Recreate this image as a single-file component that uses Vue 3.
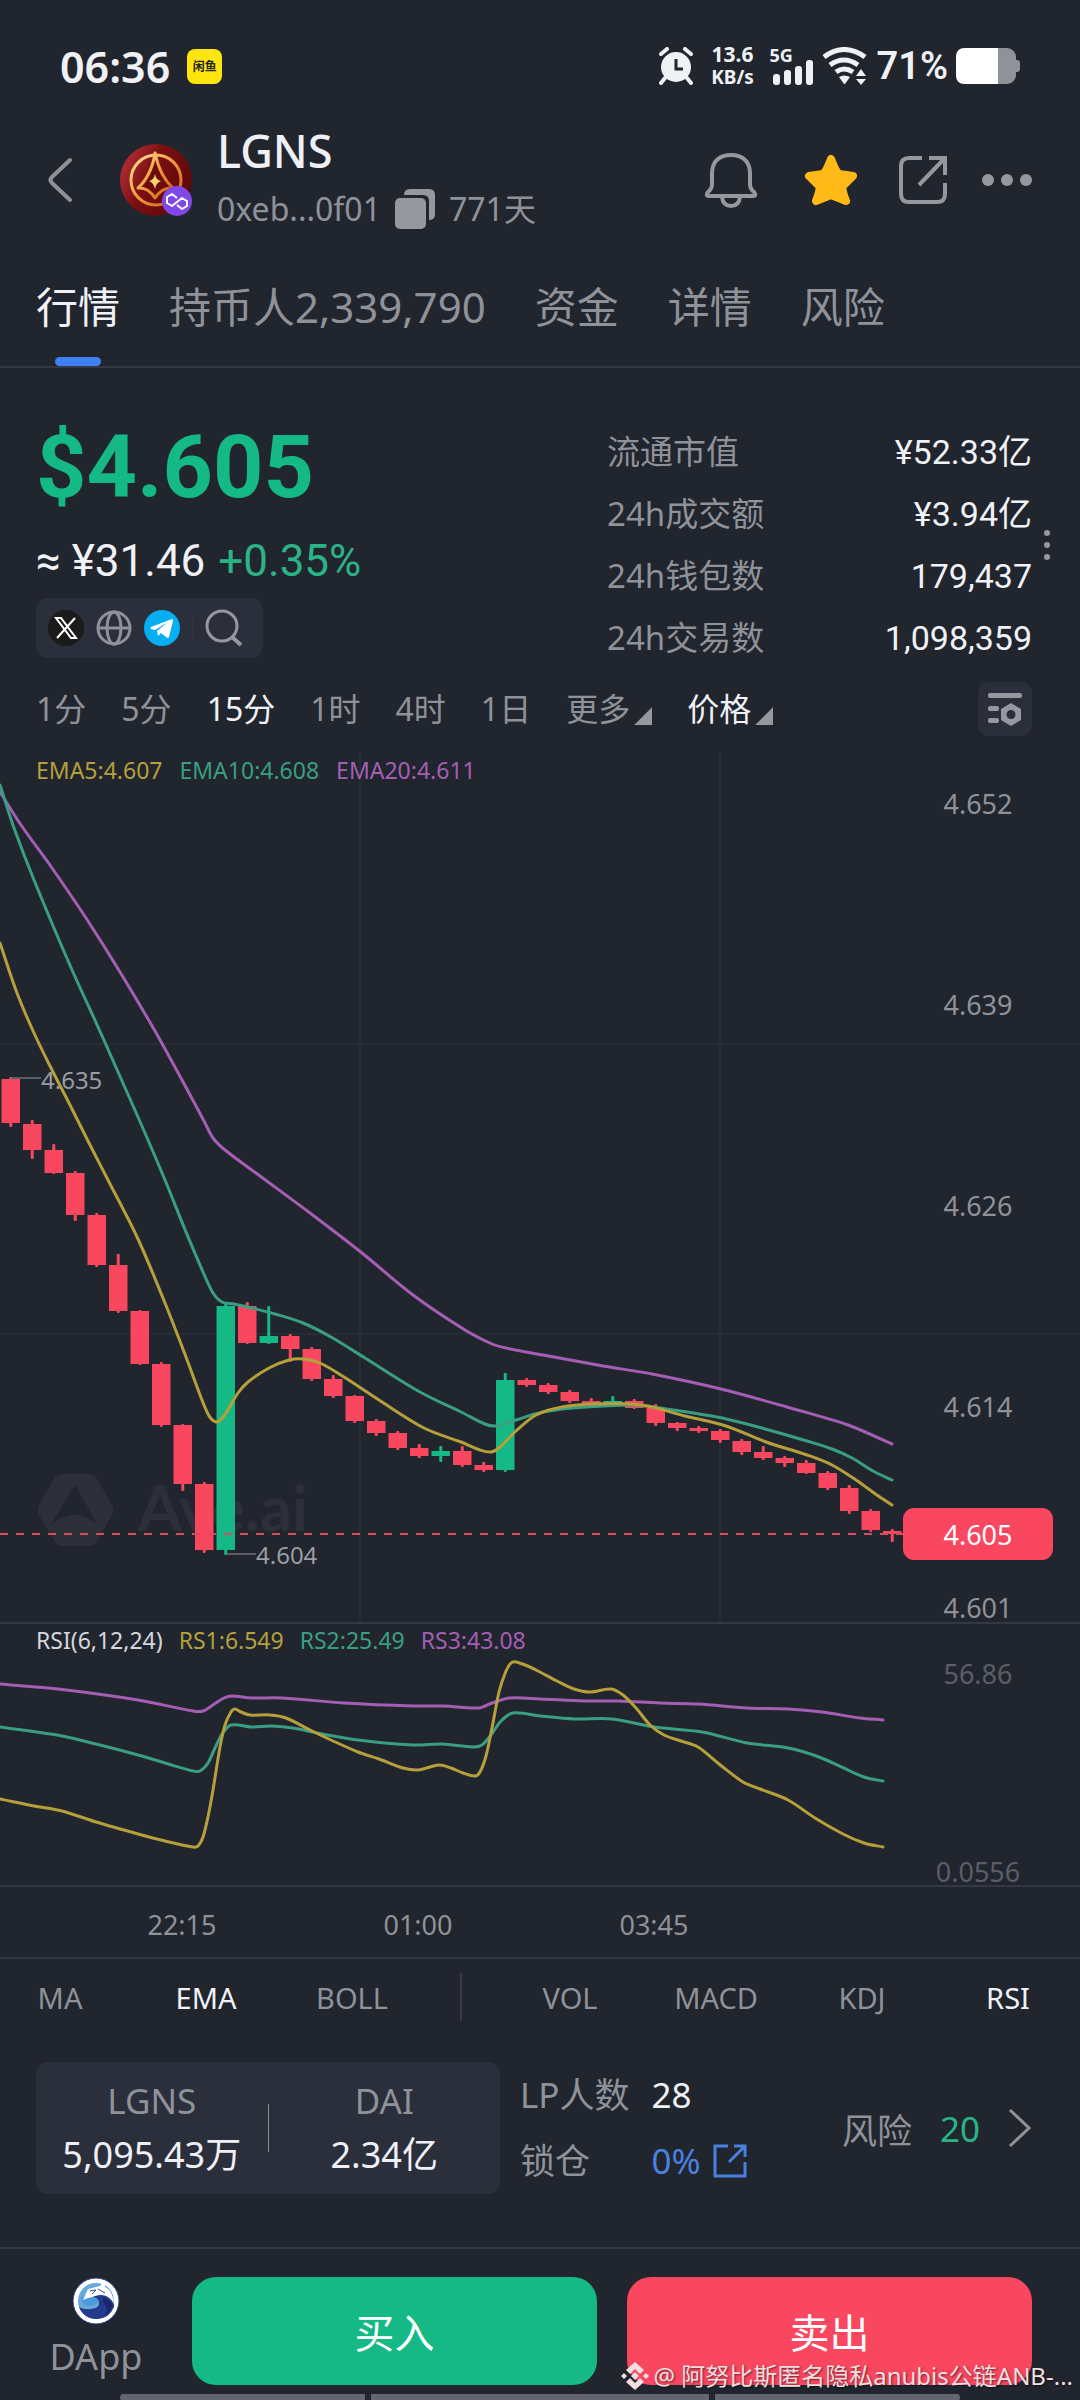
<script setup>
import { ref } from 'vue'

const tabs = ['行情', '持币人2,339,790', '资金', '详情', '风险']
const activeTab = ref('行情')

const stats = [
  { label: '流通市值', value: '¥52.33亿' },
  { label: '24h成交额', value: '¥3.94亿' },
  { label: '24h钱包数', value: '179,437' },
  { label: '24h交易数', value: '1,098,359' },
]

const periods = ['1分', '5分', '15分', '1时', '4时', '1日']
const activePeriod = ref('15分')

const overlays = ['MA', 'EMA', 'BOLL']
const oscillators = ['VOL', 'MACD', 'KDJ', 'RSI']
const activeOverlay = ref('EMA')
const activeOscillator = ref('RSI')

const axisLabels = [
  { text: '4.652', y: 814 },
  { text: '4.639', y: 1015 },
  { text: '4.626', y: 1216 },
  { text: '4.614', y: 1417 },
  { text: '4.601', y: 1618 },
]
const times = ['22:15', '01:00', '03:45']

// [body top, body bottom, wick top, wick bottom, rising]
const candleData = [
  [1079, 1123, 1077, 1127], [1124, 1150, 1120, 1159], [1150, 1173, 1144, 1174],
  [1173, 1215, 1171, 1221], [1215, 1265, 1213, 1267], [1265, 1311, 1254, 1313],
  [1311, 1364, 1310, 1365], [1364, 1425, 1362, 1427], [1425, 1484, 1424, 1491],
  [1484, 1550, 1482, 1553], [1306, 1550, 1302, 1555, 1], [1306, 1343, 1302, 1344],
  [1336, 1343, 1306, 1344, 1], [1336, 1349, 1334, 1362], [1349, 1379, 1347, 1381],
  [1379, 1396, 1375, 1398], [1396, 1421, 1395, 1423], [1421, 1433, 1419, 1436],
  [1433, 1448, 1431, 1450], [1448, 1456, 1444, 1458], [1451, 1456, 1446, 1462, 1],
  [1451, 1465, 1446, 1467], [1465, 1470, 1462, 1472], [1380, 1470, 1373, 1472, 1],
  [1380, 1385, 1378, 1387], [1385, 1392, 1383, 1394], [1392, 1401, 1390, 1403],
  [1401, 1405, 1398, 1408], [1401, 1404, 1396, 1405, 1], [1401, 1408, 1399, 1409],
  [1408, 1423, 1404, 1426], [1423, 1428, 1422, 1431], [1428, 1431, 1426, 1433],
  [1431, 1440, 1429, 1443], [1441, 1452, 1439, 1455], [1452, 1458, 1446, 1460],
  [1458, 1463, 1456, 1467], [1463, 1473, 1460, 1474], [1473, 1488, 1471, 1490],
  [1488, 1511, 1485, 1514], [1511, 1530, 1509, 1532], [1531, 1534, 1529, 1542],
]
const candles = candleData.map(([top, bottom, high, low, up], i) => ({
  x: 10.75 + 21.5 * i, top, bottom, high, low, up,
}))

// Smooth curve through the points
function curve(p) {
  let d = `M${p[0][0]} ${p[0][1]}`
  for (let i = 0; i < p.length - 1; i++) {
    const a = p[i - 1] || p[i]
    const b = p[i]
    const c = p[i + 1]
    const e = p[i + 2] || c
    const h = (c[0] - b[0]) / 3
    const m1 = (c[1] - a[1]) / (c[0] - a[0])
    const m2 = (e[1] - b[1]) / (e[0] - b[0])
    d += `C${(b[0] + h).toFixed(1)} ${(b[1] + m1 * h).toFixed(1)} ${(c[0] - h).toFixed(1)} ${(c[1] - m2 * h).toFixed(1)} ${c[0]} ${c[1]}`
  }
  return d
}

const emaLines = [
  { name: 'EMA20:4.611', tone: 'purple', d: curve([[0, 792], [21, 825], [52, 868], [86, 918], [120, 972], [155, 1031], [182, 1080], [204, 1121], [213, 1138], [225, 1150], [260, 1176], [310, 1213], [362, 1253], [413, 1295], [465, 1330], [492, 1344], [506, 1348], [543, 1355], [603, 1366], [652, 1374], [721, 1389], [787, 1407], [848, 1425], [892, 1444]]) },
  { name: 'EMA10:4.608', tone: 'teal', d: curve([[0, 785], [14, 828], [34, 880], [69, 963], [103, 1038], [138, 1117], [165, 1180], [186, 1232], [203, 1272], [213, 1293], [222, 1302], [234, 1304], [248, 1307], [275, 1314], [303, 1323], [331, 1337], [365, 1358], [420, 1392], [461, 1412], [485, 1424], [496, 1426], [516, 1420], [535, 1414], [562, 1409], [603, 1406], [636, 1405], [660, 1408], [717, 1417], [758, 1427], [807, 1441], [832, 1449], [852, 1458], [873, 1471], [892, 1480]]) },
  { name: 'EMA5:4.607', tone: 'gold', d: curve([[0, 943], [17, 993], [34, 1033], [52, 1070], [69, 1103], [89, 1143], [108, 1180], [138, 1239], [165, 1303], [186, 1357], [207, 1412], [216, 1422], [224, 1416], [238, 1393], [248, 1382], [269, 1368], [289, 1360], [303, 1359], [320, 1363], [344, 1377], [379, 1400], [424, 1428], [461, 1442], [480, 1450], [491, 1452], [499, 1448], [516, 1431], [536, 1415], [562, 1407], [595, 1404], [632, 1404], [652, 1407], [685, 1416], [726, 1426], [766, 1442], [807, 1455], [832, 1465], [856, 1480], [877, 1495], [892, 1505]]) },
]
const rsiLines = [
  { tone: 'purple', d: curve([[0, 1684], [58, 1689], [138, 1700], [193, 1711], [203, 1711], [213, 1705], [224, 1698], [232, 1696], [251, 1698], [282, 1698], [344, 1703], [413, 1706], [444, 1706], [479, 1708], [492, 1703], [510, 1698], [540, 1699], [585, 1701], [619, 1701], [660, 1703], [698, 1704], [747, 1708], [788, 1709], [822, 1712], [860, 1718], [883, 1720]]) },
  { tone: 'teal', d: curve([[0, 1727], [62, 1736], [96, 1744], [138, 1755], [165, 1763], [193, 1771], [200, 1771], [208, 1763], [215, 1748], [222, 1734], [231, 1725], [251, 1727], [272, 1726], [293, 1728], [317, 1733], [358, 1740], [413, 1745], [442, 1744], [473, 1747], [482, 1745], [491, 1735], [501, 1721], [513, 1713], [540, 1716], [574, 1719], [612, 1719], [654, 1727], [702, 1732], [747, 1743], [788, 1748], [819, 1757], [850, 1771], [867, 1778], [883, 1781]]) },
  { tone: 'gold', d: curve([[0, 1799], [34, 1806], [62, 1811], [96, 1822], [138, 1834], [165, 1841], [193, 1847], [198, 1846], [203, 1837], [208, 1817], [213, 1790], [220, 1747], [225, 1725], [231, 1712], [235, 1709], [241, 1712], [250, 1715], [270, 1715], [286, 1718], [310, 1730], [331, 1740], [358, 1752], [379, 1759], [403, 1768], [418, 1770], [439, 1765], [451, 1768], [463, 1773], [475, 1776], [480, 1772], [486, 1756], [492, 1728], [499, 1692], [506, 1671], [511, 1663], [516, 1662], [530, 1667], [540, 1672], [557, 1681], [574, 1689], [590, 1692], [611, 1689], [623, 1695], [636, 1708], [650, 1725], [664, 1735], [681, 1741], [698, 1747], [719, 1764], [743, 1782], [760, 1789], [788, 1800], [815, 1818], [843, 1834], [864, 1843], [883, 1847]]) },
]
</script>

<template>
  <div class="app">
    <div class="status">
      <div class="status-left">
        <span class="clock">06:36</span>
        <span class="fish">闲鱼</span>
      </div>
      <div class="status-right">
        <svg class="alarm" width="36" height="38" viewBox="0 0 36 38" fill="none" stroke="#f0f1f4">
          <path d="M3 7l6-5M33 7l-6-5M7 31l-4 5M29 31l4 5" stroke-width="4" stroke-linecap="round" />
          <circle cx="18" cy="20" r="15" fill="#f0f1f4" stroke="none" />
          <path d="M18 12v10h7" stroke="#21252e" stroke-width="3" />
        </svg>
        <span class="net"><span>13.6</span><span class="unit">KB/s</span></span>
        <span class="signal">
          <span class="gen">5G</span>
          <svg width="44" height="40" viewBox="0 0 44 40" fill="#f0f1f4">
            <rect x="3" y="28" width="7" height="11" rx="3" />
            <rect x="14" y="24" width="7" height="15" rx="3" />
            <rect x="25" y="20" width="7" height="19" rx="3" />
            <rect x="36" y="14" width="7" height="25" rx="3" />
          </svg>
        </span>
        <svg class="wifi" width="46" height="38" viewBox="0 0 46 38">
          <g fill="none" stroke="#f0f1f4" stroke-width="5">
            <path d="M2 10Q22-5 43 10" />
            <path d="M8 18q14-10 28 0" />
            <path d="M14 25q8-6 17 0" />
          </g>
          <path d="M17 30q5-3 11 0l-5 7h-1zM34 29l5-7 5 7zM34 32h10l-5 6z" fill="#f0f1f4" />
        </svg>
        <span class="percent">71%</span>
        <svg class="battery" width="64" height="36" viewBox="0 0 64 36">
          <rect x="0" y="0" width="60" height="36" rx="9" fill="#8f9298" />
          <path d="M59 12h2q3 0 3 3v6q0 3-3 3h-2z" fill="#8f9298" />
          <path d="M9 0h33v36H9q-9 0-9-9V9q0-9 9-9z" fill="#fff" />
        </svg>
      </div>
    </div>

    <header class="header">
      <button class="icon-btn back" aria-label="返回">
        <svg width="26" height="48" viewBox="0 0 26 48" fill="none" stroke="#8f9298" stroke-width="4" stroke-linecap="round" stroke-linejoin="round"><path d="M23 4L5 21q-3 3 0 6l18 17" /></svg>
      </button>
      <svg class="avatar" width="74" height="74" viewBox="0 0 74 74">
        <defs>
          <linearGradient id="coinRed" x1="0" y1="0.2" x2="1" y2="0.7">
            <stop offset="0" stop-color="#b8323a" /><stop offset="0.4" stop-color="#7c1013" /><stop offset="1" stop-color="#5b0709" />
          </linearGradient>
          <linearGradient id="coinGold" x1="0" y1="0" x2="1" y2="1">
            <stop offset="0" stop-color="#ffe39a" /><stop offset="0.5" stop-color="#f09a3a" /><stop offset="1" stop-color="#c9571c" />
          </linearGradient>
        </defs>
        <circle cx="37" cy="37" r="36" fill="url(#coinRed)" />
        <circle cx="37" cy="37" r="25" fill="none" stroke="url(#coinGold)" stroke-width="3" />
        <path d="M36 10C34 25 27 38 19 45q10-1 17 10 7-11 18-10C45 37 39 24 36 10z" fill="#6d0c0d" stroke="url(#coinGold)" stroke-width="3" stroke-linejoin="round" />
        <path d="M36 31q1 6 6 7-5 2-6 8-1-6-6-8 5-1 6-7z" fill="#ffd36b" />
        <circle cx="58" cy="58" r="15" fill="#8048e6" />
        <path d="M58 55l-5-4-5 3v6l5 3 10-8 5 3v5l-5 3-5-4" fill="none" stroke="#fff" stroke-width="2" stroke-linejoin="round" />
      </svg>
      <div class="title">
        <h1>LGNS</h1>
        <div class="sub">
          <span class="addr">0xeb...0f01</span>
          <button class="icon-btn copy" aria-label="复制">
            <svg width="40" height="40" viewBox="0 0 40 40" fill="#95989e">
              <rect x="0" y="9" width="31" height="31" rx="5" />
              <path d="M9 6q0-6 6-6h19q6 0 6 6v19q0 6-6 6V12q0-6-6-6z" />
            </svg>
          </button>
          <span>771天</span>
        </div>
      </div>
      <div class="actions">
        <button class="icon-btn" aria-label="提醒">
          <svg width="54" height="56" viewBox="0 0 54 56" fill="none" stroke="#95989e" stroke-width="4" stroke-linejoin="round">
            <path d="M8 21C8 9 16 3 27 3s19 6 19 18v11q0 5 4 8 3 4-1 4H5q-4 0-1-4 4-3 4-8zM18 45q1 9 9 9t9-9" />
          </svg>
        </button>
        <button class="icon-btn star" aria-label="收藏">
          <svg width="54" height="54" viewBox="0 0 54 54" fill="#ffba18" stroke="#ffba18" stroke-width="8" stroke-linejoin="round">
            <path d="M27 6q5 13 8 15l14 2-10 10q-2 2 3 15L27 42 12 48q5-13 3-15L5 23l14-2q3-2 8-15z" />
          </svg>
        </button>
        <button class="icon-btn share" aria-label="分享">
          <svg width="50" height="50" viewBox="0 0 50 50" fill="none" stroke="#95989e" stroke-width="4">
            <path d="M24 3H11q-8 0-8 8v28q0 8 8 8h28q8 0 8-8V28M31 3h16v17M47 3L21 30" />
          </svg>
        </button>
        <button class="icon-btn" aria-label="更多操作">
          <svg width="50" height="12" viewBox="0 0 50 12" fill="#95989e"><circle cx="6" cy="6" r="6" /><circle cx="25" cy="6" r="6" /><circle cx="44" cy="6" r="6" /></svg>
        </button>
      </div>
    </header>

    <nav class="tabs">
      <button v-for="t in tabs" :key="t" class="tab" :class="{ active: t === activeTab }" @click="activeTab = t">{{ t }}</button>
    </nav>

    <section class="quote">
      <div class="quote-main">
        <div class="price">$4.605</div>
        <div class="fiat"><span>≈ ¥31.46</span><span class="up">+0.35%</span></div>
        <div class="social">
          <a href="#" aria-label="X">
            <svg width="36" height="36" viewBox="0 0 36 36"><circle cx="18" cy="18" r="18" fill="#1b1b1b" /><path d="M8 8h5l15 20h-5zM27 8L9 28" fill="none" stroke="#fff" stroke-width="2" /></svg>
          </a>
          <a href="#" aria-label="官网">
            <svg width="36" height="36" viewBox="0 0 36 36" fill="none" stroke="#8f9298" stroke-width="3"><circle cx="18" cy="18" r="16" /><ellipse cx="18" cy="18" rx="7" ry="16" /><path d="M2 18h32" /></svg>
          </a>
          <a href="#" aria-label="Telegram">
            <svg width="36" height="36" viewBox="0 0 36 36"><circle cx="18" cy="18" r="18" fill="#06aef2" /><path d="M7 17L28 9q1 0 1 2l-4 16q-1 2-3 0l-5-4-3 3-1-5 11-9-13 8-4-1q-1-1 0-2z" fill="#fff" /></svg>
          </a>
          <span class="bar"></span>
          <button class="icon-btn" aria-label="搜索">
            <svg width="38" height="38" viewBox="0 0 38 38" fill="none" stroke="#95989e" stroke-width="3"><circle cx="17" cy="17" r="15" /><path d="M27 28l9 8" stroke-width="4" /></svg>
          </button>
        </div>
      </div>
      <div class="quote-side">
        <dl class="stats">
          <div v-for="s in stats" :key="s.label"><dt>{{ s.label }}</dt><dd>{{ s.value }}</dd></div>
        </dl>
        <button class="icon-btn kebab" aria-label="更多数据">
          <svg width="8" height="32" viewBox="0 0 8 32" fill="#95989e"><circle cx="4" cy="4" r="3" /><circle cx="4" cy="16" r="3" /><circle cx="4" cy="28" r="3" /></svg>
        </button>
      </div>
    </section>

    <div class="periods">
      <button v-for="p in periods" :key="p" :class="{ active: p === activePeriod }" @click="activePeriod = p">{{ p }}</button>
      <button class="drop" aria-haspopup="menu">更多</button>
      <button class="drop active" aria-haspopup="menu">价格</button>
      <button class="icon-btn settings" aria-label="图表设置">
        <svg width="34" height="34" viewBox="0 0 34 34" fill="#95989e">
          <rect x="0" y="1" width="34" height="5" rx="2" /><rect x="0" y="14" width="11" height="5" rx="2" /><rect x="0" y="26" width="11" height="5" rx="2" />
          <path fill-rule="evenodd" d="M23 11l10 6v11l-10 6-10-6V17zM23 18a4 4 0 1 0 0 9 4 4 0 1 0 0-9z" />
        </svg>
      </button>
    </div>

    <section class="panel">
      <div class="legend">
        <span class="gold">EMA5:4.607</span><span class="teal">EMA10:4.608</span><span class="purple">EMA20:4.611</span>
      </div>
      <svg class="chart" viewBox="0 752 1080 870">
        <path d="M360 752V1622M720 752V1622M0 1044H1080M0 1334H1080" class="grid" />
        <g fill="#2d3039">
          <path fill-rule="evenodd" d="M54 1479q3-5 9-5h25q6 0 9 5l15 26q3 5 0 10l-15 26q-3 5-9 5H63q-6 0-9-5l-15-26q-3-5 0-10zM75 1485l-25 41q24-22 48-1z" />
          <text x="138" y="1531" class="brand">Ave.ai</text>
        </g>
        <g v-for="(c, i) in candles" :key="i" :fill="c.up ? '#14b985' : '#f8475e'">
          <rect :x="c.x - 1.5" :y="c.high" width="3" :height="c.low - c.high" rx="1" />
          <rect :x="c.x - 9.25" :y="c.top" width="18.5" :height="c.bottom - c.top" />
        </g>
        <path d="M10 1078H41M226 1554H256" stroke="#6d7078" stroke-width="1.5" />
        <text x="41" y="1089" class="mark">4.635</text>
        <text x="256" y="1564" class="mark">4.604</text>
        <path v-for="l in emaLines" :key="l.name" :d="l.d" class="line" :class="l.tone" />
        <path d="M0 1534H905" stroke="#d84c61" stroke-width="2" stroke-dasharray="8 8" />
        <text v-for="a in axisLabels" :key="a.text" x="978" :y="a.y" class="axis">{{ a.text }}</text>
        <rect x="903" y="1508" width="150" height="52" rx="11" fill="#f8475e" />
        <text x="978" y="1545" class="axis now">4.605</text>
      </svg>
    </section>

    <section class="panel">
      <div class="legend rsi">
        <span class="light">RSI(6,12,24)</span><span class="gold">RS1:6.549</span><span class="teal">RS2:25.49</span><span class="purple">RS3:43.08</span>
      </div>
      <svg class="chart" viewBox="0 1624 1080 261">
        <path v-for="l in rsiLines" :key="l.tone" :d="l.d" class="line" :class="l.tone" />
        <text x="978" y="1684" class="axis dim">56.86</text>
        <text x="978" y="1882" class="axis dim">0.0556</text>
      </svg>
    </section>

    <div class="times"><span v-for="t in times" :key="t">{{ t }}</span></div>

    <div class="indicators">
      <div class="group">
        <button v-for="o in overlays" :key="o" :class="{ active: o === activeOverlay }" @click="activeOverlay = o">{{ o }}</button>
      </div>
      <span class="sep"></span>
      <div class="group">
        <button v-for="o in oscillators" :key="o" :class="{ active: o === activeOscillator }" @click="activeOscillator = o">{{ o }}</button>
      </div>
    </div>

    <section class="pool">
      <div class="card">
        <div class="side"><span>LGNS</span><b>5,095.43万</b></div>
        <i></i>
        <div class="side"><span>DAI</span><b>2.34亿</b></div>
      </div>
      <div class="lp">
        <span>LP人数</span><b>28</b>
        <span>锁仓</span>
        <a href="#" class="lock">0%
          <svg width="34" height="34" viewBox="0 0 34 34" fill="none" stroke="#4a80e0" stroke-width="3"><path d="M15 2H2v30h30V18M21 2h11v11M32 2L16 18" /></svg>
        </a>
      </div>
      <a href="#" class="risk">
        <span>风险</span><span class="up">20</span>
        <svg width="24" height="40" viewBox="0 0 24 40" fill="none" stroke="#8f9298" stroke-width="3"><path d="M2 2l19 18L2 38" /></svg>
      </a>
    </section>

    <footer class="footer">
      <a href="#" class="dapp">
        <svg width="48" height="48" viewBox="0 0 48 48">
          <circle cx="24" cy="24" r="23" fill="#fff" stroke="#2e3c86" stroke-width="1" />
          <circle cx="24" cy="24" r="18" fill="#68a8dc" />
          <path d="M7 30q5 3 12 2 9-1 8-7-1-5-8-5l11-4q13 4 12 14-5 12-17 12-13 0-18-12z" fill="#243a8c" />
          <path d="M9 20q1 8 8 9 8 0 9-5-2-4-8-3z" fill="#4c9bdc" />
          <path d="M11 23l5-11 12-3 4-6 1 7q8 4 9 17-5-10-15-9l-7 2-4 1z" fill="#fff" />
          <path d="M18 14l6-1-4 4M26 12l7 4" stroke="#2d5190" stroke-width="1" fill="none" />
          <path d="M31 25q8 8 0 14 9-3 9-12-3-5-9-6z" fill="#18256a" />
        </svg>
        <span>DApp</span>
      </a>
      <button class="trade buy">买入</button>
      <button class="trade sell">卖出</button>
      <div class="home"><i></i><i class="mid"></i><i></i></div>
      <div class="credit">
        <svg width="28" height="28" viewBox="0 0 28 28" fill="#f3dfe1">
          <path d="M14 0l9 8-4 4-5-5-5 5-4-4zM14 28l9-8-4-4-5 5-5-5-4 4zM14 10l4 4-4 4-4-4zM3 11l3 3-3 3-3-3zM25 11l3 3-3 3-3-3z" />
        </svg>
        <span>@ 阿努比斯匿名隐私anubis公链ANB-...</span>
      </div>
    </footer>
  </div>
</template>

<style>
body {
  margin: 0;
  background: #21252e;
}
</style>

<style scoped>
.app {
  width: 100%;
  overflow: hidden;
  background: #21252e;
  color: #8f9298;
  font-family: "Noto Sans", "Noto Sans CJK SC", sans-serif;
}
svg {
  display: block;
  flex: none;
}
button {
  padding: 0;
  border: 0;
  background: none;
  color: inherit;
  font: inherit;
  white-space: nowrap;
}
a {
  color: inherit;
  text-decoration: none;
}
b {
  font-weight: 400;
  color: #eef0f6;
}
.icon-btn {
  display: flex;
  align-items: center;
  justify-content: center;
}
.up {
  color: #2bb388;
}

.status {
  display: flex;
  justify-content: space-between;
  align-items: center;
  height: 112px;
  padding: 10px 60px 0;
  color: #f0f1f4;
}
.status-left,
.status-right {
  display: flex;
  align-items: center;
}
.clock {
  font-size: 43px;
  font-weight: 600;
}
.fish {
  width: 35px;
  margin-left: 17px;
  border-radius: 8px;
  background: #fde50d;
  color: #222;
  font-size: 12px;
  font-weight: 700;
  line-height: 35px;
  text-align: center;
}
.net {
  display: flex;
  flex-direction: column;
  align-items: center;
  width: 44px;
  margin: 0 15px 0 17px;
  font-size: 21px;
  font-weight: 700;
  line-height: 23px;
}
.unit {
  font-size: 19px;
}
.signal {
  position: relative;
}
.gen {
  position: absolute;
  top: 0;
  left: 0;
  font-size: 18px;
  font-weight: 700;
  line-height: 18px;
}
.wifi {
  margin: 0 9px 0 8px;
}
.percent {
  font-family: Roboto, sans-serif;
  font-size: 38px;
  font-weight: 600;
}
.battery {
  margin-left: 8px;
}

.header {
  display: flex;
  align-items: center;
  height: 116px;
  padding: 0 48px 0 47px;
}
.avatar {
  margin-left: 46px;
}
.title {
  margin-left: 24px;
}
h1 {
  margin: 0;
  color: #eef0f6;
  font-size: 45px;
  font-weight: 500;
  line-height: 58px;
}
.sub {
  display: flex;
  align-items: center;
  gap: 14px;
  font-size: 32px;
  line-height: 58px;
}
.actions {
  display: flex;
  align-items: center;
  margin-left: auto;
}
.star {
  margin: 0 40px 0 46px;
}
.share {
  margin-right: 34px;
}

.tabs {
  display: flex;
  gap: 49px;
  padding: 38px 36px 0;
  border-bottom: 2px solid #343842;
  font-size: 42px;
}
.tab {
  position: relative;
  height: 90px;
  padding-bottom: 29px;
  line-height: 60px;
}
.active {
  color: #f0f2f7;
}
.tab.active::after {
  content: "";
  position: absolute;
  bottom: 0;
  left: 50%;
  width: 46px;
  height: 9px;
  margin-left: -23px;
  border-radius: 5px;
  background: #4080f5;
}

.quote {
  display: flex;
  justify-content: space-between;
  padding: 47px 29px 0 36px;
}
.price {
  color: #14b985;
  font-family: Roboto, sans-serif;
  font-size: 88px;
  font-weight: 700;
  line-height: 104px;
}
.fiat {
  display: flex;
  gap: 13px;
  margin-top: 10px;
  color: #f0f2f7;
  font-family: Roboto, "Noto Sans", sans-serif;
  font-size: 44px;
  line-height: 64px;
}
.fiat .up {
  color: #2bb388;
}
.social {
  display: inline-flex;
  align-items: center;
  gap: 12px;
  height: 60px;
  margin-top: 5px;
  padding: 0 20px 0 12px;
  border-radius: 12px;
  background: #2a2f3b;
}
.bar {
  width: 1px;
  height: 18px;
  background: #343945;
}
.quote-side {
  display: flex;
  align-items: center;
  gap: 11px;
  width: 444px;
  padding-top: 6px;
}
.stats {
  flex: 1;
  margin: 0;
  font-size: 33px;
  line-height: 62px;
}
.stats div {
  display: flex;
  justify-content: space-between;
}
.stats dd {
  margin: 0;
  color: #f0f2f7;
  font-family: Roboto, "Noto Sans CJK SC", sans-serif;
  font-size: 34px;
}

.periods {
  display: flex;
  align-items: center;
  gap: 35px;
  padding: 13px 48px 16px 36px;
  font-size: 32px;
  line-height: 54px;
}
.drop {
  display: flex;
  align-items: center;
  gap: 4px;
}
.drop::after {
  content: "";
  width: 18px;
  height: 18px;
  margin-top: 14px;
  background: #95989e;
  clip-path: polygon(100% 0, 100% 100%, 0 100%);
}
.settings {
  width: 54px;
  height: 54px;
  margin-left: auto;
  border-radius: 11px;
  background: #2a2f3b;
}

.panel {
  position: relative;
  border-bottom: 2px solid #343842;
}
.chart {
  width: 100%;
  height: auto;
  overflow: visible;
}
.legend {
  position: absolute;
  top: 2px;
  left: 36px;
  display: flex;
  gap: 17px;
  font-size: 23px;
  line-height: 32px;
}
.legend.rsi {
  top: 0;
  gap: 16px;
}
.gold {
  color: #b5a03c;
}
.teal {
  color: #3a9f82;
}
.purple {
  color: #a45fb4;
}
.light {
  color: #d5d7dc;
}
.grid {
  stroke: #282c35;
  stroke-width: 2;
}
.line {
  fill: none;
  stroke: currentColor;
  stroke-width: 3;
  stroke-linecap: round;
}
.brand {
  font-family: Lato, sans-serif;
  font-size: 63px;
  font-weight: 700;
}
.mark {
  fill: #9a9da4;
  font-size: 24px;
}
.axis {
  fill: #8f9298;
  font-size: 27px;
  text-anchor: middle;
}
.dim {
  fill: #5b5e67;
}
.now {
  fill: #fff;
}

.times {
  display: grid;
  grid-template-columns: repeat(3, 236px);
  height: 64px;
  padding: 6px 0 0 64px;
  border-bottom: 2px solid #343842;
  font-size: 27px;
  line-height: 64px;
  text-align: center;
}

.indicators {
  display: flex;
  align-items: center;
  justify-content: space-between;
  height: 76px;
  padding: 0 48px 0 36px;
  font-size: 29px;
}
.group {
  display: flex;
  gap: 98px;
}
.group button {
  display: flex;
  justify-content: center;
  width: 48px;
}
.sep {
  width: 2px;
  height: 48px;
  background: #3a3d47;
}

.pool {
  display: flex;
  margin-top: 27px;
  padding: 0 48px 53px 36px;
  border-bottom: 2px solid #343842;
  font-size: 35px;
}
.card {
  display: flex;
  align-items: center;
  width: 464px;
  height: 132px;
  border-radius: 12px;
  background: #2a2f3b;
  line-height: 54px;
}
.card i {
  width: 1px;
  height: 48px;
  background: #8f9298;
}
.side {
  display: flex;
  flex: 1;
  flex-direction: column;
  align-items: center;
}
.side b {
  font-size: 36px;
}
.lp {
  display: grid;
  grid-template-columns: auto auto;
  column-gap: 22px;
  margin-left: 20px;
  line-height: 66px;
}
.lock {
  display: flex;
  align-items: center;
  gap: 12px;
  color: #4a80e0;
}
.risk {
  display: flex;
  align-items: center;
  gap: 28px;
  margin-left: auto;
}

.footer {
  position: relative;
  display: flex;
  align-items: flex-start;
  gap: 30px;
  padding: 28px 48px 15px 0;
}
.dapp {
  display: flex;
  flex-direction: column;
  align-items: center;
  width: 162px;
  padding-left: 30px;
  box-sizing: border-box;
  font-size: 36px;
  line-height: 64px;
}
.trade {
  flex: 1;
  height: 108px;
  border-radius: 24px;
  color: #fff;
  font-size: 40px;
}
.buy {
  background: #14b985;
}
.sell {
  background: #f8475e;
}
.home {
  position: absolute;
  right: 120px;
  bottom: 3px;
  left: 120px;
  display: flex;
  gap: 6px;
}
.home i {
  flex: 245;
  height: 7px;
  background: #63666f;
}
.home .mid {
  flex: 338;
}
.home i:first-child {
  border-radius: 4px 0 0 4px;
}
.home i:last-child {
  border-radius: 0 4px 4px 0;
}
.credit {
  position: absolute;
  right: 7px;
  bottom: 11px;
  display: flex;
  align-items: center;
  gap: 4px;
  color: #f0dfe1;
  font-size: 24px;
  line-height: 34px;
  white-space: nowrap;
  text-shadow: 1px 1px 2px #0008;
}
</style>
